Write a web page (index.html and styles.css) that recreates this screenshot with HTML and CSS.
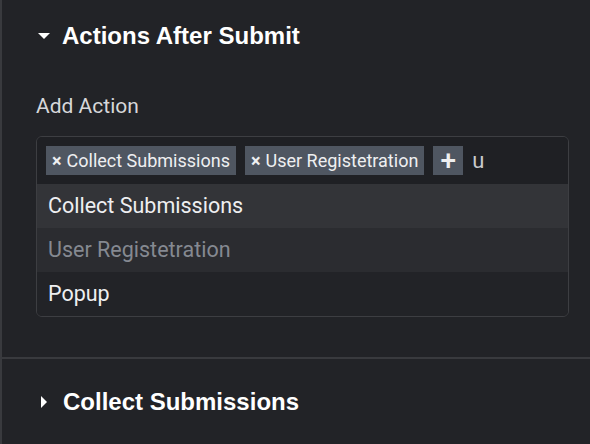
FILE: index.html
```html
<!DOCTYPE html>
<html>
<head>
    <link rel="stylesheet" href="styles.css">
</head>
<body>

    <div class="panel">
        <div class="section open">
            <h2 class="section-title"><span class="caret caret-down"></span>Actions After Submit</h2>

            <div class="field">
                <label class="field-label">Add Action</label>
                <div class="select">
                    <div class="select-input">
                        <span class="tag"><span class="tag-x">&times;</span>Collect Submissions</span>
                        <span class="tag"><span class="tag-x">&times;</span>User Registetration</span>
                        <span class="tag tag-add">+</span>
                        <span class="typed">u</span>
                    </div>
                    <ul class="options">
                        <li class="option hover">Collect Submissions</li>
                        <li class="option selected">User Registetration</li>
                        <li class="option">Popup</li>
                    </ul>
                </div>
            </div>
        </div>

        <div class="section">
            <h2 class="section-title"><span class="caret caret-right"></span>Collect Submissions</h2>
        </div>
    </div>

</body>
</html>
```

FILE: styles.css
```css
html, body {
    margin: 0;
    height: 100%;
}

body {
    background-color: #222327;
    font-family: Roboto, "Liberation Sans", sans-serif;
    color: #e0e1e3;
}

.panel {
    height: 100%;
    border-left: 2px solid #393a3e;
}

.section {
    padding: 20px 20px 0 34px;
}

.section.open {
    height: 337px;
    border-bottom: 2px solid #393a3e;
}

.section-title {
    display: flex;
    align-items: center;
    margin: 0;
    height: 32px;
    font-family: "Liberation Sans", Arial, sans-serif;
    font-size: 24px;
    font-weight: bold;
    color: #ffffff;
}

.caret {
    display: inline-block;
    width: 0;
    height: 0;
}

.caret-down {
    margin-left: 2px;
    margin-right: 12px;
    border-left: 6px solid transparent;
    border-right: 6px solid transparent;
    border-top: 6px solid #ffffff;
}

.caret-right {
    margin-left: 5px;
    margin-right: 16px;
    border-top: 6px solid transparent;
    border-bottom: 6px solid transparent;
    border-left: 6px solid #ffffff;
}

.section + .section {
    padding-top: 27px;
}

.field {
    margin-top: 42px;
}

.field-label {
    display: block;
    font-size: 21px;
    color: #d6d7da;
    margin-bottom: 18px;
}

.select {
    width: 531px;
    border: 1px solid #3d3e42;
    border-radius: 6px;
    overflow: hidden;
}

.select-input {
    display: flex;
    align-items: center;
    gap: 9px;
    height: 47px;
    padding: 0 9px;
    background-color: #1f2024;
}

.tag {
    display: inline-flex;
    align-items: center;
    height: 29px;
    padding: 0 6px;
    background-color: #4f5661;
    color: #eeeff1;
    font-size: 18px;
}

.tag-x {
    font-size: 18px;
    font-weight: bold;
    margin-right: 5px;
}

.tag-add {
    width: 30px;
    padding: 0;
    justify-content: center;
    font-size: 28px;
    font-weight: 500;
}

.typed {
    font-size: 22px;
    color: #c9cacd;
}

.options {
    list-style: none;
    margin: 0;
    padding: 0;
}

.option {
    height: 44px;
    line-height: 44px;
    padding-left: 11px;
    font-size: 21.5px;
    color: #eeeff1;
    background-color: #222327;
}

.option.hover {
    background-color: #333438;
}

.option.selected {
    background-color: #2b2c30;
    color: #858991;
}
```
